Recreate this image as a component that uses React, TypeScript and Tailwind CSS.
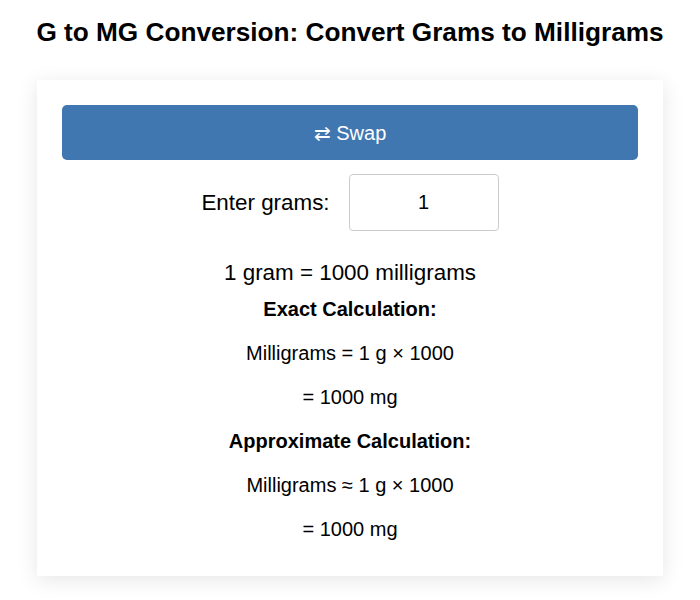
import React, { useState } from 'react';

export default function App() {
  const [grams, setGrams] = useState('1');
  const mg = Number(grams) * 1000;

  return (
    <div className="min-h-[600px] bg-white font-['Liberation_Sans',Arial,sans-serif] text-black">
      <h1 className="pt-[17px] text-center text-[26.2px] font-bold leading-[30px]">
        G to MG Conversion: Convert Grams to Milligrams
      </h1>

      <div className="mx-[37px] mt-[33px] bg-white p-[25px] shadow-[0_4px_20px_rgba(0,0,0,0.1)]">
        <button className="h-[55px] w-full rounded-[5px] bg-[#4177b0] text-[20px] text-white">
          ⇄ Swap
        </button>

        <div className="mt-[14px] flex items-center justify-center gap-[19px]">
          <label className="text-[22.4px]">Enter grams:</label>
          <input
            value={grams}
            onChange={(e) => setGrams(e.target.value)}
            className="h-[57px] w-[150px] rounded-[4px] border border-[#ccc] text-center text-[20px] outline-none"
          />
        </div>

        <div className="mt-[30px] text-center text-[22.4px] leading-[24px]">1 gram = 1000 milligrams</div>

        <div className="mt-[2px] text-center text-[20px] leading-[44px]">
          <div className="font-bold">Exact Calculation:</div>
          <div>Milligrams = {grams} g × 1000</div>
          <div>= {mg} mg</div>
          <div className="font-bold">Approximate Calculation:</div>
          <div>Milligrams ≈ {grams} g × 1000</div>
          <div>= {mg} mg</div>
        </div>
      </div>
    </div>
  );
}
